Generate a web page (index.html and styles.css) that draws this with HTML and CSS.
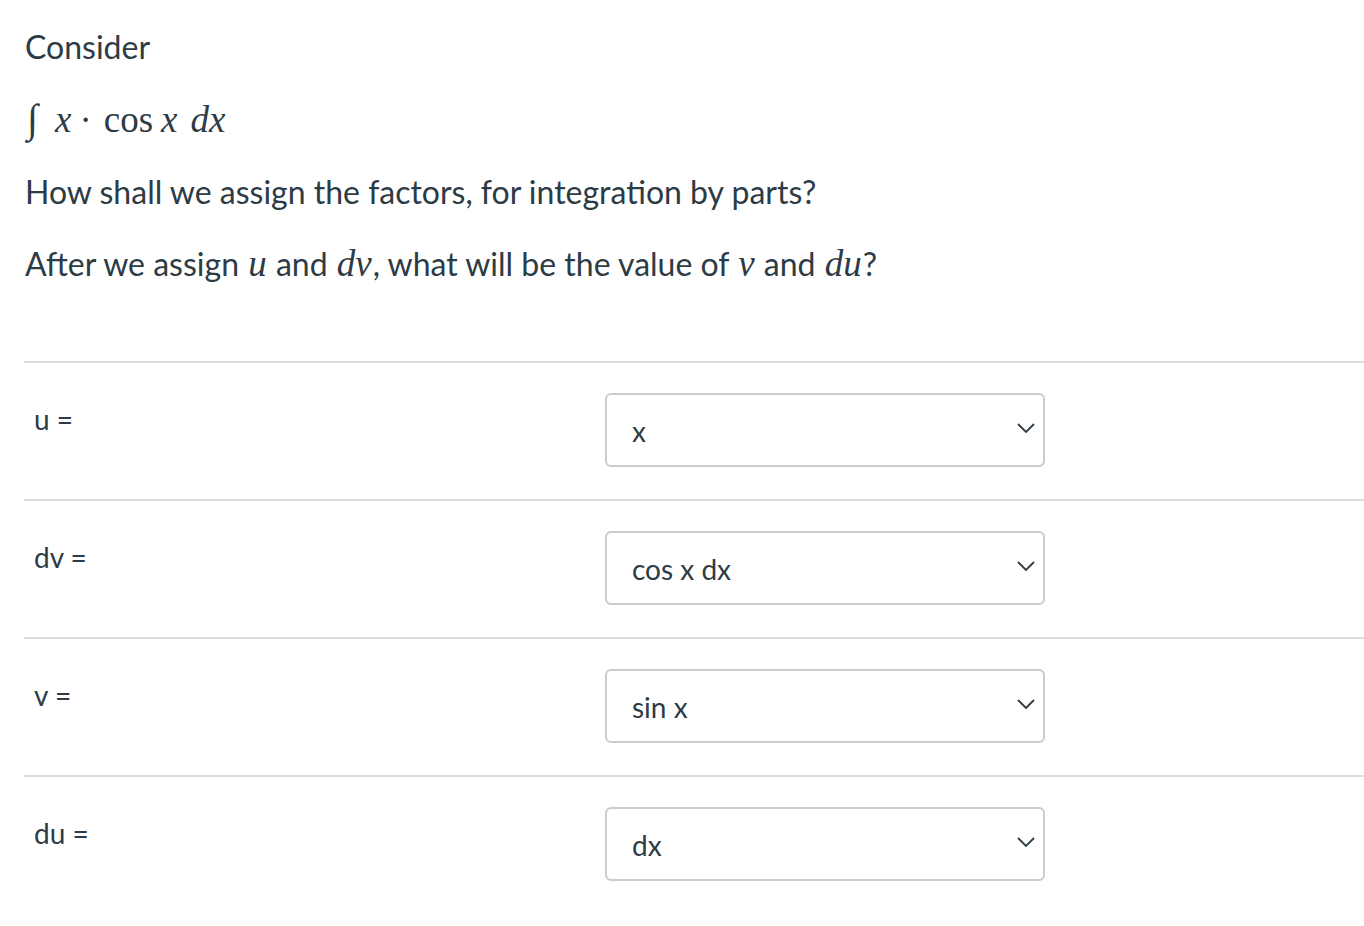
FILE: index.html
```html
<!DOCTYPE html>
<html lang="en">
<head>
<meta charset="utf-8">
<title>Integration by parts</title>
<link rel="stylesheet" href="styles.css">
</head>
<body>
<div class="quiz">
  <div class="question">
    <p class="para">Consider</p>
    <p class="para math-line"><span class="int">∫</span><span class="mi">x</span><span class="mo">·</span><span class="mn">cos</span><span class="mi">x</span><span class="mi d">dx</span></p>
    <p class="para">How shall we assign the factors, for integration by parts?</p>
    <p class="para">After we assign <span class="im">u</span> and <span class="im">dv</span>, what will be the value of <span class="im">v</span> and <span class="im">du</span>?</p>
  </div>
  <div class="answers">
    <div class="row">
      <div class="label">u =</div>
      <div class="select"><span class="value">x</span><svg class="chev" viewBox="0 0 18 10" width="18" height="10"><path d="M1 1 L9 9 L17 1" fill="none" stroke="#2d3b45" stroke-width="1.8"/></svg></div>
    </div>
    <div class="row">
      <div class="label">dv =</div>
      <div class="select"><span class="value">cos x dx</span><svg class="chev" viewBox="0 0 18 10" width="18" height="10"><path d="M1 1 L9 9 L17 1" fill="none" stroke="#2d3b45" stroke-width="1.8"/></svg></div>
    </div>
    <div class="row">
      <div class="label">v =</div>
      <div class="select"><span class="value">sin x</span><svg class="chev" viewBox="0 0 18 10" width="18" height="10"><path d="M1 1 L9 9 L17 1" fill="none" stroke="#2d3b45" stroke-width="1.8"/></svg></div>
    </div>
    <div class="row">
      <div class="label">du =</div>
      <div class="select"><span class="value">dx</span><svg class="chev" viewBox="0 0 18 10" width="18" height="10"><path d="M1 1 L9 9 L17 1" fill="none" stroke="#2d3b45" stroke-width="1.8"/></svg></div>
    </div>
  </div>
</div>
</body>
</html>
```

FILE: styles.css
```css
html, body {
  margin: 0;
  padding: 0;
  background: #ffffff;
}
body {
  font-family: Lato, "Open Sans", "Liberation Sans", sans-serif;
  color: #2d3b45;
}
.quiz {
  padding: 26px 0 0 24px;
}
.question {
  padding-bottom: 46px;
}
.para {
  margin: 0 0 30px 0;
  font-size: 32px;
  line-height: 42px;
  padding-left: 1px;
}
.math-line {
  font-family: "Liberation Serif", "DejaVu Serif", serif;
  font-size: 37px;
  display: flex;
  align-items: baseline;
}
.int {
  font-style: italic;
  font-size: 40px;
  margin-left: 2px;
  margin-right: 17px;
}
.mi {
  font-style: italic;
}
.mo {
  margin: 0 12px 0 8px;
}
.mn {
  margin-right: 8px;
}
.mi.d {
  margin-left: 13px;
}
.im {
  font-family: "Liberation Serif", "DejaVu Serif", serif;
  font-style: italic;
  font-size: 37px;
  line-height: 1;
  padding: 0 1px;
}
.answers {
  display: flex;
  flex-direction: column;
}
.row {
  display: flex;
  border-top: 2px solid #dddddd;
  padding: 30px 0 32px 10px;
}
.label {
  width: 571px;
  font-size: 28px;
  line-height: 36px;
  padding-top: 8px;
}
.select {
  box-sizing: border-box;
  width: 440px;
  height: 74px;
  border: 2px solid #c7cdd1;
  border-radius: 6px;
  display: flex;
  align-items: center;
  justify-content: space-between;
  padding: 2px 8px 0 25px;
  font-size: 28px;
}
.chev {
  display: block;
  margin-top: -6px;
}
```
